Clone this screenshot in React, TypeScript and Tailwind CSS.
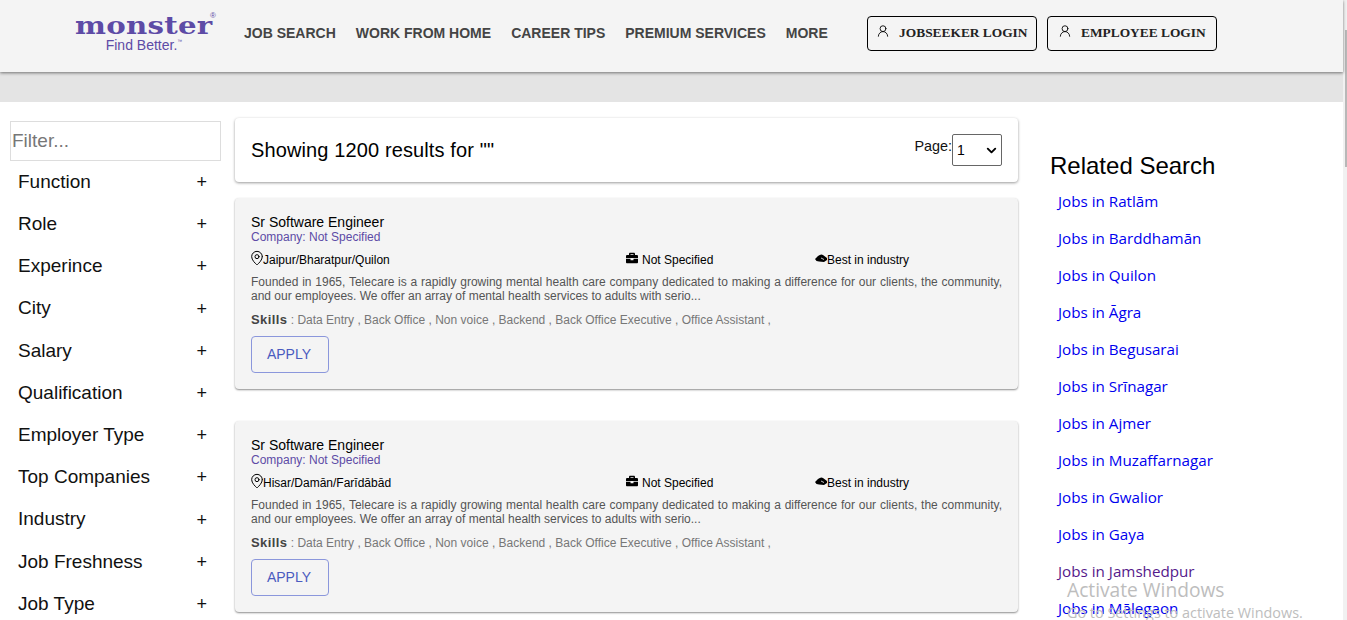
import { ChevronDown, MapPin, UserRound } from "lucide-react"
import { FaBriefcase } from "react-icons/fa"

const navLinks = ["JOB SEARCH", "WORK FROM HOME", "CAREER TIPS", "PREMIUM SERVICES", "MORE"]
const logins = ["JOBSEEKER LOGIN", "EMPLOYEE LOGIN"]
const filters = [
  "Function",
  "Role",
  "Experince",
  "City",
  "Salary",
  "Qualification",
  "Employer Type",
  "Top Companies",
  "Industry",
  "Job Freshness",
  "Job Type",
]
const cities = [
  "Ratlām",
  "Barddhamān",
  "Quilon",
  "Āgra",
  "Begusarai",
  "Srīnagar",
  "Ajmer",
  "Muzaffarnagar",
  "Gwalior",
  "Gaya",
  "Jamshedpur",
  "Mālegaon",
]
const jobs = ["Jaipur/Bharatpur/Quilon", "Hisar/Damān/Farīdābād"]

function MoneyIcon() {
  return (
    <svg viewBox="0 0 12 8" className="mb-[3px] h-[8px] w-[12px]" fill="currentColor">
      <path d="M0 5 L3 2 Q6 -0.5 8 1 L12 4 L12 6 L9 8 L4 7.5 Q1 7.5 0 5Z" />
      <path d="M6 4 L9 5.5" stroke="#f4f4f4" strokeWidth="0.8" fill="none" />
    </svg>
  )
}

function JobCard({ location }: { location: string }) {
  return (
    <div className="h-[191px] rounded bg-[#f4f4f4] pl-4 pr-4 pt-[16px] font-['Liberation_Sans',sans-serif] shadow-[0_1px_2px_rgba(0,0,0,0.45)]">
      <h3 className="text-[14px] leading-[16px] text-black">Sr Software Engineer</h3>
      <p className="text-[12px] leading-[14px] text-[#5d4ba6]">Company: Not Specified</p>
      <div className="mt-[7px] flex h-[16px] items-center text-[12px] text-black">
        <div className="flex w-[375px] items-center">
          <MapPin className="-mx-[2px] mb-[3px] h-[16px] w-[16px]" strokeWidth={1.5} />
          <span className="mt-[1px]">{location}</span>
        </div>
        <div className="flex w-[189px] items-center">
          <FaBriefcase className="mb-[3px] mr-[4px] h-[12px] w-[12px]" />
          <span className="mt-[1px]">Not Specified</span>
        </div>
        <div className="flex items-center">
          <MoneyIcon />
          <span className="mt-[1px]">Best in industry</span>
        </div>
      </div>
      <p className="mt-[8px] text-justify text-[12px] leading-[14px] text-[#555555]">
        Founded in 1965, Telecare is a rapidly growing mental health care company dedicated to making a difference for our clients, the community, and our employees. We offer an array of mental health services to adults with serio...
      </p>
      <p className="mt-[10px] h-[14px] text-[12px] leading-[14px] text-[#777777]">
        <b className="text-[13px] leading-[14px] tracking-[0.4px] text-[#444444]">Skills</b> : Data Entry , Back Office , Non voice , Backend , Back Office Executive , Office Assistant ,
      </p>
      <button className="mt-[9px] h-[37px] w-[78px] rounded border border-[#8b97dc] pr-[2px] text-[14px] text-[#4a5bc0]">
        APPLY
      </button>
    </div>
  )
}

export default function App() {
  return (
    <div className="relative flex h-[620px] overflow-hidden bg-white">
      <div className="min-w-0 flex-1">
        <header className="relative flex h-[72px] items-start bg-[#f4f4f4] shadow-[0_1px_3px_rgba(0,0,0,0.5)]">
          <div className="ml-[74px] flex w-[139px] flex-col items-center pt-[12px] text-[#5d4ba6]">
            <div className="relative h-[28px] w-[139px] text-center font-['DejaVu_Serif',serif] text-[25px] font-bold leading-[28px]">
              <span className="inline-block scale-x-[1.17] tracking-[0.2px]">monster</span>
              <span className="absolute right-[-3px] top-[0px] font-['Liberation_Sans',sans-serif] text-[8px] font-normal leading-[8px]">®</span>
            </div>
            <div className="relative mr-[4px] mt-[-2px] font-['Liberation_Sans',sans-serif] text-[14px] leading-[15px]">
              Find Better.
              <span className="absolute left-full top-0 text-[5px] leading-[7px]">™</span>
            </div>
          </div>
          <nav className="ml-[31px] mt-[25px] flex gap-[20px] font-['Liberation_Sans',sans-serif] text-[14px] font-bold leading-[16px] text-[#444444]">
            {navLinks.map((link) => (
              <a key={link}>{link}</a>
            ))}
          </nav>
          <div className="ml-[39px] mt-[16px] flex gap-[10px]">
            {logins.map((label) => (
              <button
                key={label}
                className="flex h-[35px] w-[170px] items-center justify-center gap-[9px] rounded border border-black font-['Liberation_Serif',serif] text-[13.4px] font-bold text-[#222222]"
              >
                <UserRound className="mb-[5px] h-[14px] w-[14px] text-black" strokeWidth={1.5} />
                {label}
              </button>
            ))}
          </div>
        </header>
        <div className="h-[30px] bg-[#e4e4e4]" />

        <div className="flex">
          <aside className="ml-[10px] mt-[19px] w-[211px]">
            <input
              placeholder="Filter..."
              className="h-[40px] w-full border border-[#dddddd] pl-[1px] font-['Liberation_Sans',sans-serif] text-[19px] outline-none placeholder:text-[#777777]"
            />
            <ul className="font-['Liberation_Sans',sans-serif] text-[19px] text-[#111111]">
              {filters.map((name) => (
                <li key={name} className="flex h-[42.2px] items-center justify-between pl-[8px] pr-[14px]">
                  <span>{name}</span>
                  <span className="text-[18px] leading-none">+</span>
                </li>
              ))}
            </ul>
          </aside>

          <main className="ml-[14px] mt-[16px] w-[783px]">
            <div className="flex h-[64px] items-start justify-between rounded bg-white pl-4 pr-4 font-['Liberation_Sans',sans-serif] shadow-[0_1px_3px_rgba(0,0,0,0.4)]">
              <p className="mt-[18px] text-[20px] leading-[28px] tracking-[0.12px] text-black">Showing 1200 results for ""</p>
              <div className="mt-[16px] flex items-start">
                <span className="mt-[3px] text-[14.4px] leading-[19px] text-[#111111]">Page:</span>
                <div className="relative h-[32px] w-[50px] rounded-[2px] border border-[#666666] bg-white">
                  <span className="absolute left-[4px] top-[6px] text-[14px] leading-[18px]">1</span>
                  <ChevronDown className="absolute right-[2px] top-[8px] h-[15px] w-[15px] text-black" strokeWidth={3} />
                </div>
              </div>
            </div>
            <div className="mt-[16px] flex flex-col gap-[32px]">
              {jobs.map((location) => (
                <JobCard key={location} location={location} />
              ))}
            </div>
          </main>

          <aside className="ml-[32px] mt-[48px] flex-1">
            <h2 className="font-['Liberation_Sans',sans-serif] text-[24px] leading-[32px] text-black">Related Search</h2>
            <ul className="mt-[4px] pl-[8px] font-['Open_Sans',sans-serif] text-[15.2px]">
              {cities.map((city) => (
                <li key={city} className={`h-[37px] leading-[30px] ${city === "Jamshedpur" ? "text-[#551a8b]" : "text-[#0000ee]"}`}>
                  Jobs in {city}
                </li>
              ))}
            </ul>
          </aside>
        </div>
      </div>

      <div className="w-[4px] shrink-0 bg-[#f1f1f1] pl-[2px]">
        <div className="mt-[30px] h-[137px] bg-[#b8b8b8]" />
      </div>

      <div className="pointer-events-none absolute left-[1067px] top-[576px] font-['Open_Sans',sans-serif] text-[#bdbdbd]">
        <p className="text-[19.2px] leading-[28px]">Activate Windows</p>
        <p className="text-[14.4px] leading-[18px]">Go to Settings to activate Windows.</p>
      </div>
    </div>
  )
}
